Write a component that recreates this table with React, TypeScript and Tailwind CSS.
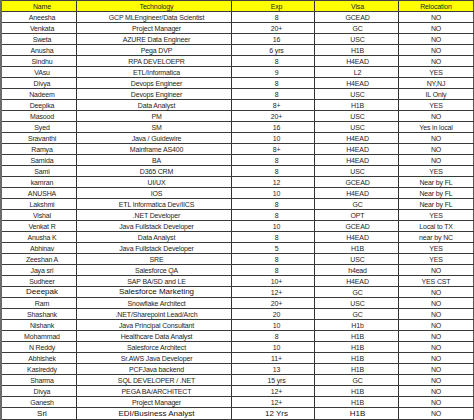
import React from "react";

const rows: string[][] = [
  ["Aneesha", "GCP MLEngineer/Data Scientist", "8", "GCEAD", "NO"],
  ["Venkata", "Project Manager", "20+", "GC", "NO"],
  ["Sweta", "AZURE Data Engineer", "16", "USC", "NO"],
  ["Anusha", "Pega DVP", "6 yrs", "H1B", "NO"],
  ["Sindhu", "RPA DEVELOEPR", "8", "H4EAD", "NO"],
  ["VAsu", "ETL/Informatica", "9", "L2", "YES"],
  ["Divya", "Devops Engineer", "8", "H4EAD", "NY,NJ"],
  ["Nadeem", "Devops Engineer", "8", "USC", "IL Only"],
  ["Deepika", "Data Analyst", "8+", "H1B", "YES"],
  ["Masood", "PM", "20+", "USC", "NO"],
  ["Syed", "SM", "16", "USC", "Yes in local"],
  ["Sravanthi", "Java / Guidewire", "10", "H4EAD", "NO"],
  ["Ramya", "Mainframe AS400", "8+", "H4EAD", "NO"],
  ["Samida", "BA", "8", "H4EAD", "NO"],
  ["Sami", "D365 CRM", "8", "USC", "YES"],
  ["kamran", "UI/UX", "12", "GCEAD", "Near by FL"],
  ["ANUSHA", "IOS", "10", "H4EAD", "Near by FL"],
  ["Lakshmi", "ETL Informatica Dev/IICS", "8", "GC", "Near by FL"],
  ["Vishal", ".NET Developer", "8", "OPT", "YES"],
  ["Venkat R", "Java Fullstack Developer", "10", "GCEAD", "Local to TX"],
  ["Anusha K", "Data Analyst", "8", "H4EAD", "near by NC"],
  ["Abhinav", "Java Fullstack Developer", "5", "H1B", "YES"],
  ["Zeeshan A", "SRE", "8", "USC", "YES"],
  ["Jaya sri", "Salesforce QA", "8", "h4ead", "NO"],
  ["Sudheer", "SAP BA/SD and LE", "10+", "H4EAD", "YES CST"],
  ["Deeepak", "Salesforce Marketing", "12+", "GC", "NO"],
  ["Ram", "Snowflake Architect", "20+", "USC", "NO"],
  ["Shashank", ".NET/Sharepoint Lead/Arch", "20", "GC", "NO"],
  ["Nishank", "Java Principal Consultant", "10", "H1b", "NO"],
  ["Mohammad", "Healthcare Data Analyst", "8", "H1B", "NO"],
  ["N Reddy", "Salesforce Architect", "10", "H1B", "NO"],
  ["Abhishek", "Sr.AWS Java Developer", "11+", "H1B", "NO"],
  ["Kasireddy", "PCFJava backend", "13", "H1B", "NO"],
  ["Sharma", "SQL DEVELOPER / .NET", "15 yrs", "GC", "NO"],
  ["Divya", "PEGA BA/ARCHITECT", "12+", "H1B", "NO"],
  ["Ganesh", "Project Manager", "12+", "H1B", "NO"],
  ["Sri", "EDI/Business Analyst", "12 Yrs", "H1B", "NO"],
];

const small = "text-[7px] tracking-[-0.15px]";
const big = "text-[8px] tracking-[0px] text-[#111]";

function Row({ cells, header, idx }: { cells: string[]; header?: boolean; idx?: number }) {
  const isDeeepak = idx === 25;
  const isSri = idx === 36;
  const bigCols = isDeeepak ? [0, 1] : isSri ? [0, 1, 2, 3] : [];
  const h = header ? "h-[12px] border-t border-t-[#444]" : isSri ? "h-[12px]" : "h-[11px]";
  const bg = header ? "bg-[#ffff00]" : "bg-white";
  const cls = (i: number) => (bigCols.includes(i) ? big : small);
  return (
    <div className={`flex ${h} ${bg} border-b border-b-[#3a3a3a]`}>
      <div className={`w-[75px] shrink-0 flex items-center justify-center pl-[6px] border-r border-r-[#333] ${cls(0)}`}>
        <span className="leading-none whitespace-nowrap">{cells[0]}</span>
      </div>
      <div className={`w-[155px] shrink-0 flex items-center justify-center pl-[5px] border-r border-r-[#333] ${cls(1)}`}>
        <span className="leading-none whitespace-nowrap">{cells[1]}</span>
      </div>
      <div className={`w-[83px] shrink-0 flex items-center justify-center pl-[7px] border-r border-r-[#333] ${cls(2)}`}>
        <span className="leading-none whitespace-nowrap">{cells[2]}</span>
      </div>
      <div className={`w-[84px] shrink-0 flex items-center justify-center pl-[2px] border-r border-r-[#333] ${cls(3)}`}>
        <span className="leading-none whitespace-nowrap">{cells[3]}</span>
      </div>
      <div className={`flex-1 flex items-center justify-center border-r border-r-[#555] ${cls(4)}`}>
        <span className="leading-none whitespace-nowrap">{cells[4]}</span>
      </div>
    </div>
  );
}

export default function App() {
  return (
    <div
      className="w-[474px] h-[420px] overflow-hidden bg-white text-[#262626] border-l-2 border-l-[#6b6b6b]"
      style={{ fontFamily: '"Liberation Sans", Arial, sans-serif' }}
    >
      <Row header cells={["Name", "Technology", "Exp", "Visa", "Relocation"]} />
      {rows.map((r, i) => (
        <Row key={i} idx={i} cells={r} />
      ))}
    </div>
  );
}
